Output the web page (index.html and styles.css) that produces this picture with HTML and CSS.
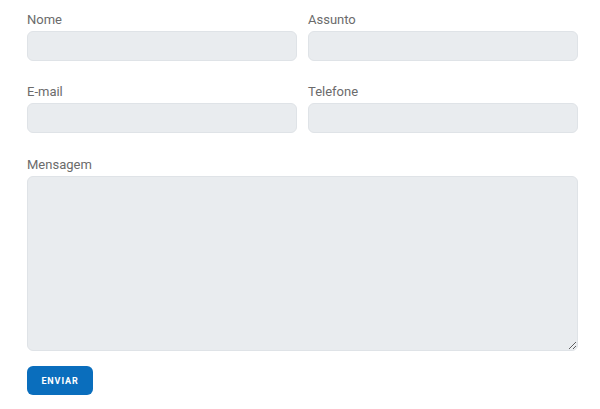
FILE: index.html
```html
<!DOCTYPE html>
<html>
<head>
    <title>Contato</title>
    <link rel="stylesheet" href="styles.css">
</head>
<body>
    <form class="contact-form">
        <div class="row">
            <div class="field">
                <label for="nome">Nome</label>
                <input type="text" id="nome">
            </div>
            <div class="field">
                <label for="assunto">Assunto</label>
                <input type="text" id="assunto">
            </div>
        </div>
        <div class="row">
            <div class="field">
                <label for="email">E-mail</label>
                <input type="text" id="email">
            </div>
            <div class="field">
                <label for="telefone">Telefone</label>
                <input type="text" id="telefone">
            </div>
        </div>
        <div class="field field-message">
            <label for="mensagem">Mensagem</label>
            <textarea id="mensagem"></textarea>
        </div>
        <button type="button" class="btn-send">ENVIAR</button>
    </form>
</body>
</html>
```

FILE: styles.css
```css
body {
    font-family: Roboto, "Liberation Sans", sans-serif;
    background: #fff;
    margin: 0;
    padding: 10px 22px 0 27px;
}

.row {
    display: grid;
    grid-template-columns: 1fr 1fr;
    gap: 11px;
}

.field {
    margin-bottom: 21px;
}

.field-message {
    margin-top: 1px;
    margin-bottom: 15px;
}

label {
    display: block;
    font-size: 13px;
    line-height: 18px;
    color: #6b6b6b;
    padding-top: 1px;
    margin-bottom: 2px;
}

input[type="text"],
textarea {
    display: block;
    width: 100%;
    box-sizing: border-box;
    background-color: #e9ecef;
    border: 1px solid #dfe3e7;
    border-radius: 6px;
    font-family: inherit;
    font-size: 13px;
    padding: 6px 10px;
}

input[type="text"] {
    height: 30px;
}

textarea {
    height: 175px;
    resize: vertical;
}

.btn-send {
    display: block;
    width: 66px;
    height: 29px;
    background-color: #0a6ebd;
    color: #fff;
    border: none;
    border-radius: 6px;
    font-family: inherit;
    font-size: 9px;
    font-weight: 700;
    letter-spacing: 0.9px;
    cursor: pointer;
}
```
